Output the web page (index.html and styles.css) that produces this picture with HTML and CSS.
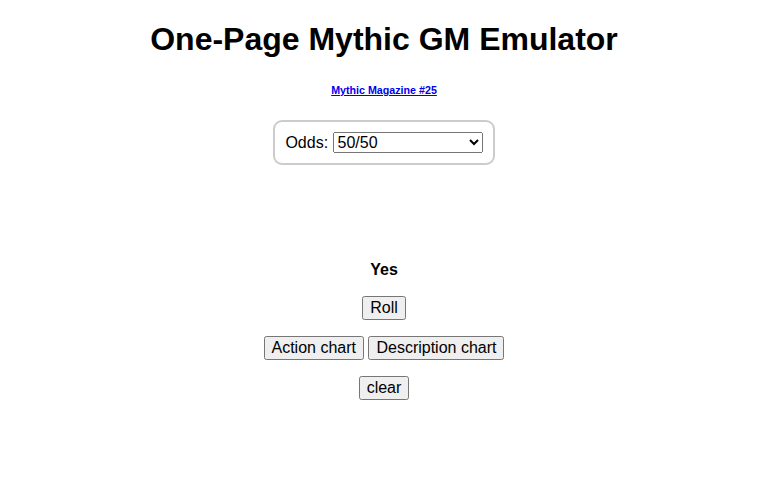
FILE: index.html
```
<html>
<head>
    <title>One-Page Mythic GM Emulator</title>
    <link rel="stylesheet" href="styles.css">
</head>
<body>
    <h1>One-Page Mythic GM Emulator</h1>
    <p class="source"><a href="#">Mythic Magazine #25</a></p>

    <fieldset id="odds-box">
        <label for="odds">Odds:</label>
        <select name="odds" id="odds">
            <option value="impossible">Impossible</option>
            <option value="unlikely">Unlikely</option>
            <option value="even" selected>50/50</option>
            <option value="likely">Likely</option>
            <option value="certain">Near certain</option>
        </select>
    </fieldset>

    <div id="output">
        <div id="chart"></div>
        <p id="answer">Yes</p>
    </div>

    <p><button type="button" id="roll">Roll</button></p>
    <p>
        <button type="button" id="action">Action chart</button>
        <button type="button" id="description">Description chart</button>
    </p>
    <p><button type="button" id="clear">clear</button></p>
</body>
</html>
```
FILE: styles.css
```
body {
    margin: 8px;
    font-family: "Liberation Sans", Arial, sans-serif;
    font-size: 16px;
    text-align: center;
    color: #000;
    background: #fff;
}
h1 {
    font-size: 32px;
    margin: 13px 0 26px 0;
}
.source {
    font-size: 10.7px;
    font-weight: bold;
    margin: 0;
}
.source a {
    color: #00e;
}
#odds-box {
    display: inline-block;
    margin: 24px 0 0 0;
    padding: 10px 10px;
    border: 2px solid #ccc;
    border-radius: 9px;
}
#odds {
    width: 150px;
    font-family: "Liberation Sans", Arial, sans-serif;
    font-size: 16px;
}
#output {
    margin-top: 96px;
}
#answer {
    font-weight: bold;
    margin: 16px 0 17px 0;
}
button {
    font-family: "Liberation Sans", Arial, sans-serif;
    font-size: 16px;
}
```
